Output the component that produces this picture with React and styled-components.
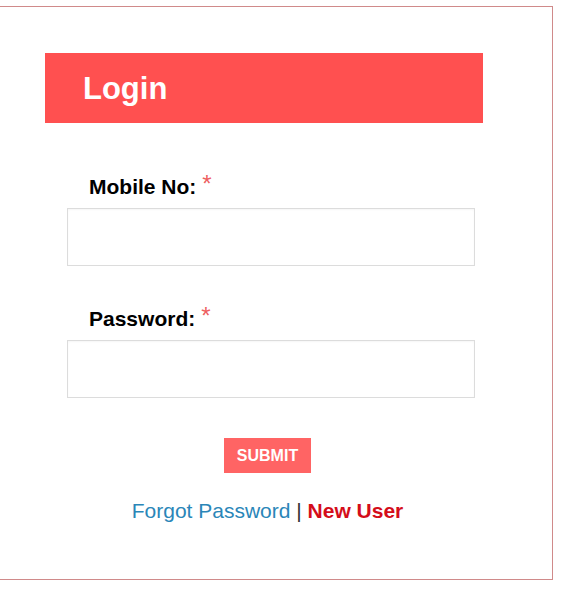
import React, {useState} from 'react';
import styled, {createGlobalStyle} from 'styled-components';

const GlobalStyle = createGlobalStyle`
  html, body {
    margin: 0;
    padding: 0;
    background: #fff;
  }
  body {
    font-family: "Liberation Sans", Arial, sans-serif;
    overflow: hidden;
  }
`;

const Panel = styled.div`
  box-sizing: border-box;
  margin: 6px 0 0 -10px;
  width: 563px;
  height: 574px;
  border: 1px solid #d08a8a;
  padding-top: 46px;
`;

const Header = styled.div`
  box-sizing: border-box;
  margin-left: 54px;
  width: 438px;
  height: 70px;
  background: #ff5050;
  display: flex;
  align-items: center;
  padding-left: 38px;
`;

const Title = styled.h1`
  margin: 0;
  color: #fff;
  font-size: 31px;
  font-weight: bold;
  line-height: 1;
`;

const Form = styled.form`
  margin-left: 54px;
  width: 445px;
  padding-top: 52px;
  display: flex;
  flex-direction: column;
`;

const Field = styled.div`
  display: flex;
  flex-direction: column;
  margin-bottom: ${p => p.$gap}px;
`;

const Label = styled.label`
  padding-left: 44px;
  font-size: 21px;
  line-height: 24px;
  font-weight: bold;
  color: #000;
  margin-bottom: 9px;
`;

const Star = styled.span`
  color: #ee5f5f;
  font-size: 24px;
  line-height: 0;
  font-weight: normal;
  margin-left: 6px;
  vertical-align: 2px;
`;

const Input = styled.input`
  box-sizing: border-box;
  margin-left: 22px;
  width: 408px;
  height: 58px;
  border: 1px solid #dcdcdc;
  box-shadow: inset 0 1px 2px rgba(0, 0, 0, 0.04);
  outline: none;
  padding: 0 12px;
  font-family: inherit;
  font-size: 16px;
`;

const Submit = styled.button`
  align-self: center;
  height: 35px;
  padding: 0 13px;
  border: none;
  background: #ff6464;
  color: #fff;
  font-family: inherit;
  font-size: 16px;
  font-weight: bold;
  cursor: pointer;
`;

const Links = styled.div`
  margin-top: 26px;
  text-align: center;
  font-size: 21px;
  line-height: 24px;
  color: #333;
`;

const Link = styled.a`
  text-decoration: none;
  color: ${p => p.$accent ? '#d40d1a' : '#2a86b8'};
  font-weight: ${p => p.$accent ? 'bold' : 'normal'};
`;

const App = () => {
  const [mobile, setMobile] = useState('')
  const [password, setPassword] = useState('')

  const onSubmit = (e) => {
    e.preventDefault()
  }

  return (
    <>
      <GlobalStyle />
      <Panel>
        <Header>
          <Title>Login</Title>
        </Header>
        <Form onSubmit={onSubmit}>
          <Field $gap={41}>
            <Label>Mobile No:<Star>*</Star></Label>
            <Input type="text" value={mobile} onChange={e => setMobile(e.target.value)} />
          </Field>
          <Field $gap={40}>
            <Label>Password:<Star>*</Star></Label>
            <Input type="password" value={password} onChange={e => setPassword(e.target.value)} />
          </Field>
          <Submit type="submit">SUBMIT</Submit>
          <Links>
            <Link href="#">Forgot Password</Link> | <Link href="#" $accent>New User</Link>
          </Links>
        </Form>
      </Panel>
    </>
  )
}

export default App
